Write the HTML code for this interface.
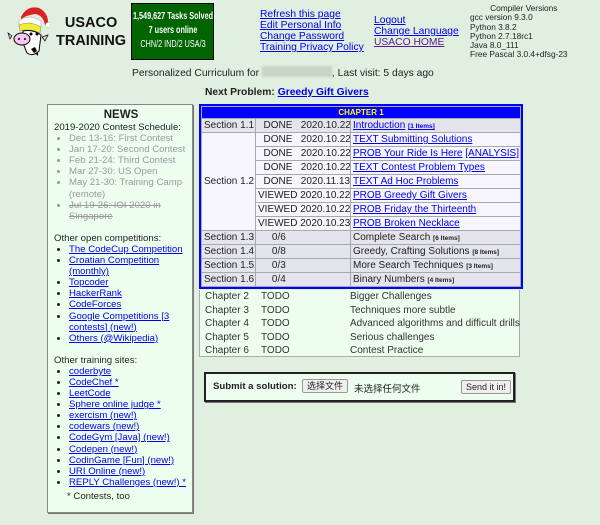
<!DOCTYPE html>
<html><head><meta charset="utf-8"><style>
body{margin:0;width:600px;height:525px;background:#e0efe0;font-family:"Liberation Sans",Arial,sans-serif;font-size:10px;color:#222;position:relative;overflow:hidden}
a{color:#00e;text-decoration:underline}
.abs{position:absolute;white-space:nowrap}
.green{left:131px;top:3px;width:83px;height:57px;background:#006400;border:1px solid #000;color:#fff;font-size:9.8px;line-height:14px;padding-top:6px;box-sizing:border-box;overflow:hidden}
.green div{width:120px;margin-left:-19.5px;text-align:center;transform:scaleX(0.74)}
.links{line-height:11px;font-size:10.3px}
.news{left:47px;top:104px;width:146px;height:409px;background:#eefeee;border:1px solid #888;box-shadow:1px 1px 0 #777;box-sizing:border-box;padding:3px 4px 3px 6px;line-height:11.1px;font-size:9.6px;white-space:nowrap}
.news ul{margin:0;padding-left:15px}
.news li{margin:0}
.gray{color:#999}
table.ch{position:absolute;left:199px;top:104px;width:324px;border:2px solid #00f;border-spacing:1px;background:#a8a8b0;font-size:10px;table-layout:fixed;box-sizing:border-box}
table.ch td{height:13px;padding:0 2px;line-height:13px;white-space:nowrap;overflow:hidden;vertical-align:middle}
table.ch td.hd{background:#00f;color:#ff0;font-weight:bold;text-align:center;font-size:8px;height:11px;line-height:11px}
.s{background:#e4e4ec}
.w{background:#f6f6fc}
.sm{font-size:6.5px;font-weight:bold;line-height:1px;vertical-align:baseline}
.rest{position:absolute;left:199px;top:290px;width:321px;height:67px;background:#eefeee;border:1px solid #aaa;border-top:none;box-sizing:border-box;font-size:10px;color:#333}
.rest div{position:absolute;line-height:13.5px;white-space:nowrap}
.sub{position:absolute;left:204px;top:372px;width:311px;height:30px;border:2px solid #222;box-sizing:border-box;background:#eefeee;box-shadow:1px 1px 0 #777}
.btn{position:absolute;border:1px solid #999;background:#efefef;font-size:9px;line-height:12px;padding:0 4px;border-radius:2px;white-space:nowrap}
</style></head><body>
<svg class="abs" style="left:7px;top:3px" width="42" height="56" viewBox="0 0 42 56">
<path d="M14 14 Q20 2 32 5 Q42 10 41 22 L38 22 Q36 12 28 11 Q20 12 14 16Z" fill="#d22"/>
<circle cx="41" cy="22" r="2.5" fill="#fff" stroke="#aaa" stroke-width=".5"/>
<path d="M12 18 Q22 10 34 18 L34 24 Q22 18 12 24Z" fill="#fff" stroke="#999" stroke-width=".5"/>
<path d="M12 22 Q22 17 34 24 L33 30 Q22 25 13 28Z" fill="#ee3" stroke="#886" stroke-width=".5"/>
<path d="M16 28 Q26 26 34 32 L32 48 Q26 54 20 50 L16 40Z" fill="#fff" stroke="#000" stroke-width="1"/>
<ellipse cx="15" cy="36" rx="8" ry="6" fill="#f5c6f0" stroke="#000" stroke-width="1"/>
<circle cx="12" cy="36" r="1" fill="#000"/><circle cx="18" cy="36" r="1" fill="#000"/>
<circle cx="24" cy="31" r="1.5" fill="#000"/><circle cx="30" cy="31" r="1.5" fill="#000"/>
<path d="M24 46 l4 -2 l2 4 l-3 2z M28 50 l3 0 l0 3z" fill="#000"/>
<path d="M5 33 L1 30 L3 36Z M35 34 L41 32 L38 38Z" fill="#f5c6f0" stroke="#000" stroke-width=".7"/>
</svg>
<div class="abs" style="left:56px;top:14px;font-weight:bold;font-size:14.5px;line-height:18px;text-align:center;color:#111">USACO<br>TRAINING</div>
<div class="abs green"><div><b>1,549,627 Tasks Solved</b></div><div><b>7 users online</b></div><div>CHN/2 IND/2 USA/3</div></div>
<div class="abs links" style="left:260px;top:9px"><a>Refresh this page</a><br><a>Edit Personal Info</a><br><a>Change Password</a><br><a>Training Privacy Policy</a></div>
<div class="abs links" style="left:374px;top:15px"><a>Logout</a><br><a>Change Language</a><br><a style="color:#551a8b">USACO HOME</a></div>
<div class="abs" style="left:470px;top:4px;font-size:8.3px;line-height:9.3px;color:#222"><div style="text-align:center;padding-left:10px">Compiler Versions</div>gcc version 9.3.0<br>Python 3.8.2<br>Python 2.7.18rc1<br>Java 8.0_111<br>Free Pascal 3.0.4+dfsg-23</div>
<div class="abs" style="left:132px;top:66px;font-size:10.3px">Personalized Curriculum for <span style="display:inline-block;width:70px;height:11px;background:#c8d4c8;vertical-align:-1px;filter:blur(1px)"></span>, Last visit: 5 days ago</div>
<div class="abs" style="left:205px;top:87px;font-size:10.3px"><b>Next Problem:</b> <a style="font-weight:bold">Greedy Gift Givers</a></div>

<div class="abs news">
<div style="text-align:center;font-weight:bold;font-size:11.5px;line-height:14px">NEWS</div>
<div>2019-2020 Contest Schedule:</div>
<ul class="gray"><li>Dec 13-16: First Contest</li><li>Jan 17-20: Second Contest</li><li>Feb 21-24: Third Contest</li><li>Mar 27-30: US Open</li><li>May 21-30: Training Camp<br>(remote)</li><li><s>Jul 19-26: IOI 2020 in<br>Singapore</s></li></ul>
<div style="height:11px"></div>
<div>Other open competitions:</div>
<ul><li><a>The CodeCup Competition</a></li><li><a>Croatian Competition<br>(monthly)</a></li><li><a>Topcoder</a></li><li><a>HackerRank</a></li><li><a>CodeForces</a></li><li><a>Google Competitions [3<br>contests] (new!)</a></li><li><a>Others (@Wikipedia)</a></li></ul>
<div style="height:11px"></div>
<div>Other training sites:</div>
<ul><li><a>coderbyte</a></li><li><a>CodeChef *</a></li><li><a>LeetCode</a></li><li><a>Sphere online judge *</a></li><li><a>exercism (new!)</a></li><li><a>codewars (new!)</a></li><li><a>CodeGym [Java] (new!)</a></li><li><a>Codepen (new!)</a></li><li><a>CodinGame [Fun] (new!)</a></li><li><a>URI Online (new!)</a></li><li><a>REPLY Challenges (new!) *</a></li></ul>
<div style="padding-left:13px;margin-top:3px">* Contests, too</div>
</div>

<table class="ch">
<colgroup><col style="width:53px"><col style="width:94px"><col></colgroup>
<tr><td colspan="3" class="hd">CHAPTER 1</td></tr>
<tr><td class="s">Section 1.1</td><td class="s">&nbsp;&nbsp;DONE&nbsp;&nbsp; 2020.10.22</td><td class="s"><a>Introduction</a> <a class="sm">[1 Items]</a></td></tr>
<tr><td class="w" rowspan="7">Section 1.2</td><td class="w">&nbsp;&nbsp;DONE&nbsp;&nbsp; 2020.10.22</td><td class="w"><a>TEXT Submitting Solutions</a></td></tr>
<tr><td class="w">&nbsp;&nbsp;DONE&nbsp;&nbsp; 2020.10.22</td><td class="w"><a>PROB Your Ride Is Here</a> <a>[ANALYSIS]</a></td></tr>
<tr><td class="w">&nbsp;&nbsp;DONE&nbsp;&nbsp; 2020.10.22</td><td class="w"><a>TEXT Contest Problem Types</a></td></tr>
<tr><td class="w">&nbsp;&nbsp;DONE&nbsp;&nbsp; 2020.11.13</td><td class="w"><a>TEXT Ad Hoc Problems</a></td></tr>
<tr><td class="w">VIEWED 2020.10.22</td><td class="w"><a>PROB Greedy Gift Givers</a></td></tr>
<tr><td class="w">VIEWED 2020.10.22</td><td class="w"><a>PROB Friday the Thirteenth</a></td></tr>
<tr><td class="w">VIEWED 2020.10.23</td><td class="w"><a>PROB Broken Necklace</a></td></tr>
<tr><td class="s">Section 1.3</td><td class="s">&nbsp;&nbsp;&nbsp;&nbsp;&nbsp;0/6</td><td class="s">Complete Search <span class="sm">[6 Items]</span></td></tr>
<tr><td class="s">Section 1.4</td><td class="s">&nbsp;&nbsp;&nbsp;&nbsp;&nbsp;0/8</td><td class="s">Greedy, Crafting Solutions <span class="sm">[8 Items]</span></td></tr>
<tr><td class="s">Section 1.5</td><td class="s">&nbsp;&nbsp;&nbsp;&nbsp;&nbsp;0/3</td><td class="s">More Search Techniques <span class="sm">[3 Items]</span></td></tr>
<tr><td class="s">Section 1.6</td><td class="s">&nbsp;&nbsp;&nbsp;&nbsp;&nbsp;0/4</td><td class="s">Binary Numbers <span class="sm">[4 Items]</span></td></tr>
</table>

<div class="rest">
<div style="left:5px;top:0">Chapter 2<br>Chapter 3<br>Chapter 4<br>Chapter 5<br>Chapter 6</div>
<div style="left:61px;top:0">TODO<br>TODO<br>TODO<br>TODO<br>TODO</div>
<div style="left:150px;top:0">Bigger Challenges<br>Techniques more subtle<br>Advanced algorithms and difficult drills<br>Serious challenges<br>Contest Practice</div>
</div>

<div class="sub">
<div class="abs" style="left:7px;top:7px;font-weight:bold;font-size:9.6px">Submit a solution:</div>
<div class="btn" style="left:96px;top:5px;font-family:'Liberation Sans','Noto Sans CJK SC',sans-serif">选择文件</div>
<div class="abs" style="left:148px;top:7px;font-size:9.5px;font-family:'Liberation Sans','Noto Sans CJK SC',sans-serif">未选择任何文件</div>
<div class="btn" style="left:255px;top:6px">Send it in!</div>
</div>
</body></html>
